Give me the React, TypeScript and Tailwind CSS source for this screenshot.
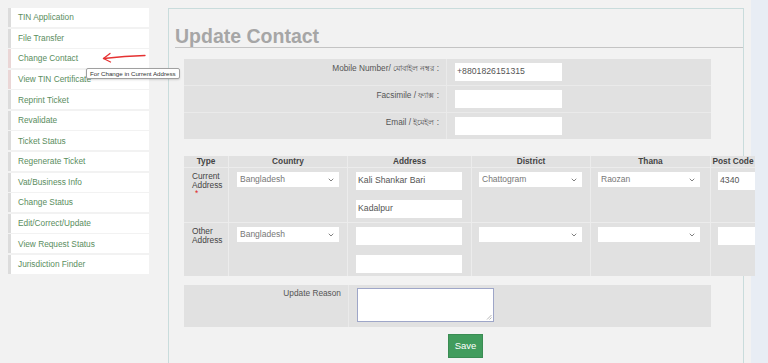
import { ChevronDown } from "lucide-react";

const menu = [
  { label: "TIN Application" },
  { label: "File Transfer" },
  { label: "Change Contact", marked: true },
  { label: "View TIN Certificate", marked: true },
  { label: "Reprint Ticket" },
  { label: "Revalidate" },
  { label: "Ticket Status" },
  { label: "Regenerate Ticket" },
  { label: "Vat/Business Info" },
  { label: "Change Status" },
  { label: "Edit/Correct/Update" },
  { label: "View Request Status" },
  { label: "Jurisdiction Finder" },
];

const font = { fontFamily: '"Liberation Sans", Arial, "Noto Sans", sans-serif' };

function FakeSelect({ value, width }: { value?: string; width: string }) {
  return (
    <div className={`${width} h-[15px] bg-white flex items-center justify-between pl-[3px] pr-[4px] text-[8.5px] text-[#777]`}>
      <span>{value}</span>
      <ChevronDown size={8} strokeWidth={2.5} className="text-[#666]" />
    </div>
  );
}

function TextBox({ value, width }: { value?: string; width: string }) {
  return (
    <div className={`${width} h-[18px] bg-white flex items-center pl-[2px] text-[8.7px] text-[#555]`}>
      {value}
    </div>
  );
}

export default function App() {
  return (
    <div className="relative w-[768px] h-[363px] overflow-hidden bg-[#f2f2f2] flex" style={font}>
      {/* sidebar */}
      <div className="w-[141px] ml-[8px] mt-[8px] flex flex-col shrink-0">
        {menu.map((m) => (
          <div
            key={m.label}
            className={`h-[19px] mb-[1.58px] bg-white border-l-[3px] flex items-center pl-[7px] text-[8.3px] text-[#5a8d5e] ${
              m.marked ? "border-[#ead6d6]" : "border-[#dcdcdc]"
            }`}
          >
            {m.label}
          </div>
        ))}
      </div>

      {/* main panel */}
      <div className="ml-[19px] mt-[8px] w-[576px] shrink-0 border-l border-t border-r border-[#c9dcdc] flex flex-col">
        <div className="ml-[6px] pt-[17px] pb-[1px] border-b border-[#c4c4c4] text-[19.5px] leading-[20px] font-bold text-[#a6a6a6]">
          Update Contact
        </div>

        {/* contact */}
        <div className="ml-[15px] mt-[11px] w-[527px] grid grid-cols-[262px_264px] gap-px bg-[#eaeaea] text-[8.3px] text-[#555]">
          {[
            ["Mobile Number/ মোবাইল নম্বর :", "+8801826151315"],
            ["Facsimile / ফ্যাক্স :", ""],
            ["Email / ইমেইল :", ""],
          ].map(([label, val], i) => (
            <div key={i} className="contents">
              <div className="h-[26px] bg-[#e1e1e1] text-right pr-[7px] pt-[4px] leading-[10px]">{label}</div>
              <div className="h-[26px] bg-[#e1e1e1] pl-[8px] pt-[4px]">
                <TextBox value={val} width="w-[107px]" />
              </div>
            </div>
          ))}
        </div>

        {/* address */}
        <div className="relative ml-[15px] mt-[17px] w-[571px] grid grid-cols-[44px_118px_123px_118px_119px_44px] grid-rows-[11px_54px_53px] gap-px bg-[#ececec] text-[8.3px] text-[#444]">
          {["Type", "Country", "Address", "District", "Thana", "Post Code"].map((h) => (
            <div key={h} className="bg-[#e1e1e1] text-center font-bold leading-[11px]">
              {h}
            </div>
          ))}

          <div className="bg-[#e1e1e1] pl-[8px] pt-[4px] leading-[8.5px]">
            Current
            <br />
            Address
            <br />
            <span className="pl-[3px] text-[#e02424]">*</span>
          </div>
          <div className="bg-[#e1e1e1] pl-[8px] pt-[4px]">
            <FakeSelect value="Bangladesh" width="w-[102px]" />
          </div>
          <div className="bg-[#e1e1e1] pl-[8px] pt-[4px] flex flex-col gap-[10px]">
            <TextBox value="Kali Shankar Bari" width="w-[106px]" />
            <TextBox value="Kadalpur" width="w-[106px]" />
          </div>
          <div className="bg-[#e1e1e1] pl-[7px] pt-[4px]">
            <FakeSelect value="Chattogram" width="w-[103px]" />
          </div>
          <div className="bg-[#e1e1e1] pl-[7px] pt-[4px]">
            <FakeSelect value="Raozan" width="w-[102px]" />
          </div>
          <div className="bg-[#e1e1e1] pl-[7px] pt-[4px]">
            <TextBox value="4340" width="w-[37px]" />
          </div>

          <div className="bg-[#e1e1e1] pl-[8px] pt-[4px] leading-[8.5px]">
            Other
            <br />
            Address
          </div>
          <div className="bg-[#e1e1e1] pl-[8px] pt-[4px]">
            <FakeSelect value="Bangladesh" width="w-[102px]" />
          </div>
          <div className="bg-[#e1e1e1] pl-[8px] pt-[4px] flex flex-col gap-[10px]">
            <TextBox width="w-[106px]" />
            <TextBox width="w-[106px]" />
          </div>
          <div className="bg-[#e1e1e1] pl-[7px] pt-[4px]">
            <FakeSelect width="w-[103px]" />
          </div>
          <div className="bg-[#e1e1e1] pl-[7px] pt-[4px]">
            <FakeSelect width="w-[102px]" />
          </div>
          <div className="bg-[#e1e1e1] pl-[7px] pt-[4px]">
            <TextBox width="w-[37px]" />
          </div>
        </div>

        {/* update reason */}
        <div className="ml-[15px] mt-[9px] w-[527px] grid grid-cols-[164px_362px] gap-px bg-[#eaeaea] text-[8.3px] text-[#555]">
          <div className="h-[42px] bg-[#e1e1e1] text-right pr-[7px] pt-[3px] leading-[10px]">Update Reason</div>
          <div className="h-[42px] bg-[#e1e1e1] pl-[8px] pt-[3px]">
            <div className="relative w-[137px] h-[34px] bg-white border border-[#9ea6c8]">
              <svg width="6" height="6" viewBox="0 0 6 6" className="absolute right-[1px] bottom-[1px]">
                <path d="M5.5 1 L1 5.5 M5.5 3.5 L3.5 5.5" stroke="#999" strokeWidth="0.7" />
              </svg>
            </div>
          </div>
        </div>

        <div className="ml-[279px] mt-[5px]">
          <button className="w-[35px] h-[24px] bg-[#419c5d] border border-[#3a8c53] text-white text-[9.5px]">
            Save
          </button>
        </div>
      </div>

      {/* right strip */}
      <div className="ml-[7px] flex-1 bg-[#e8edf4]" />

      {/* tooltip + arrow */}
      <svg width="50" height="16" viewBox="0 0 50 16" className="absolute left-[100px] top-[50px]">
        <path d="M45 5.5 Q25 6 3.5 8.5" stroke="#e53232" strokeWidth="1.3" fill="none" strokeLinecap="round" />
        <path d="M10 3.5 L3.5 8.5 L10.5 12" stroke="#e53232" strokeWidth="1.3" fill="none" strokeLinecap="round" strokeLinejoin="round" />
      </svg>
      <div className="absolute left-[86px] top-[68px] h-[11px] px-[3px] bg-white border border-[#a0a0a0] rounded-[2px] shadow-[0_1px_2px_rgba(0,0,0,0.15)] flex items-center text-[6.2px] text-[#333] whitespace-nowrap">
        For Change in Current Address
      </div>
    </div>
  );
}
